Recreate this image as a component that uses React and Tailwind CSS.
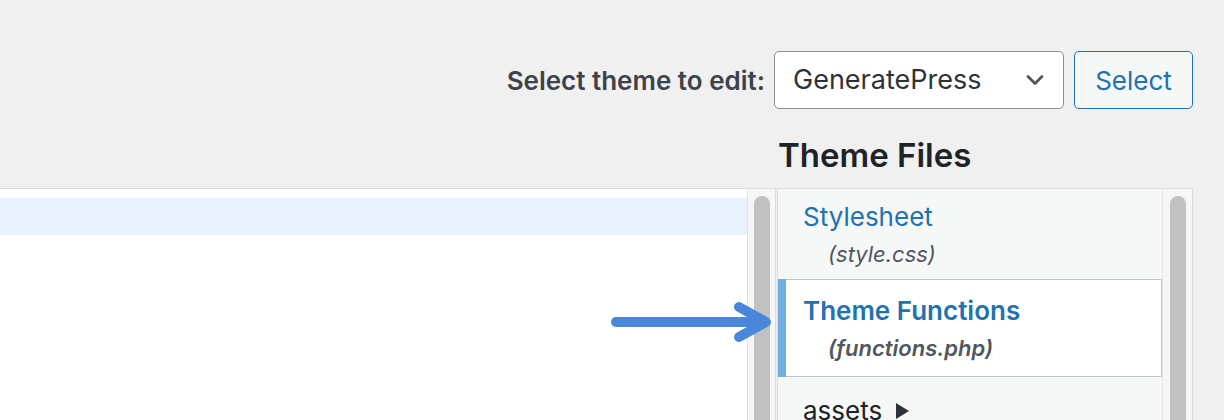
import { ChevronDown } from 'lucide-react';

const font = { fontFamily: 'Inter, "Noto Sans", sans-serif' };

const FileItem = ({ name, file, active }) => (
  <div
    className={`relative pl-[25px] ${active ? 'bg-white border border-[#c3c4c7] border-l-0 h-[98px] pt-[15px]' : 'h-[90px] pt-[12px]'}`}
  >
    {active && <div className="absolute left-0 -top-px -bottom-px w-[8px] bg-[#72aee6]"></div>}
    <div className={`text-[26px] leading-[32px] text-[#2271b1] ${active ? 'font-semibold' : ''}`}>{name}</div>
    <div className={`pl-[25px] mt-[6px] text-[22px] leading-[30px] italic text-[#50575e] ${active ? 'font-semibold' : ''}`}>
      {file}
    </div>
  </div>
);

const Scrollbar = ({ className }) => (
  <div className={`shrink-0 bg-[#f6f6f6] pt-[7px] flex justify-center ${className}`}>
    <div className="w-[16px] h-[400px] rounded-full bg-[#c1c1c1]"></div>
  </div>
);

export default function App() {
  return (
    <div className="relative w-full h-[420px] overflow-hidden bg-[#f0f0f1]" style={font}>
      <div className="flex justify-end items-center pt-[51px] pr-[31px]">
        <label className="text-[26px] font-semibold text-[#3c434a] mr-[9px]">Select theme to edit:</label>
        <div className="w-[290px] h-[58px] bg-white border border-[#8c8f94] rounded-[5px] flex items-center justify-between pl-[18px] pr-[14px]">
          <span className="text-[27px] text-[#2c3338]">GeneratePress</span>
          <ChevronDown className="w-[28px] h-[28px] text-[#50575e]" strokeWidth={2.4} />
        </div>
        <button className="ml-[10px] w-[119px] h-[58px] border border-[#2271b1] rounded-[5px] bg-[#f6f7f7] text-[26px] text-[#2271b1]">
          Select
        </button>
      </div>

      <div className="flex items-start pr-[31px]">
        <div className="w-[776px] mt-[79px] h-[300px] flex border-t border-[#dcdcde] bg-white">
          <div className="flex-1 pt-[9px] border-r border-[#e2e2e2]">
            <div className="h-[37px] bg-[#e8f2fd]"></div>
          </div>
          <Scrollbar className="w-[28px] border-r border-[#dcdcde]" />
        </div>

        <div className="w-[416px] ml-[1px]">
          <h2 className="h-[79px] pt-[26px] pl-[1px] text-[33px] leading-[40px] font-semibold text-[#1d2327]">Theme Files</h2>
          <div className="flex h-[300px] border border-[#dcdcde] bg-[#f6f7f7]">
            <div className="flex-1">
              <FileItem name="Stylesheet" file="(style.css)" />
              <FileItem name="Theme Functions" file="(functions.php)" active />
              <div className="pl-[25px] pt-[18px] flex items-center gap-[14px] text-[26px] leading-[32px] text-[#1d2327]">
                assets
                <span className="w-0 h-0 border-y-[8px] border-y-transparent border-l-[13px] border-l-[#2c3338]"></span>
              </div>
            </div>
            <Scrollbar className="w-[30px] border-l border-[#e6e6e6]" />
          </div>
        </div>
      </div>

      <svg className="absolute left-[600px] top-[295px]" width="180" height="55" viewBox="600 295 180 55">
        <path d="M616 322 H762" stroke="#4a86db" strokeWidth="10" strokeLinecap="round" />
        <path d="M739 307 L766 322 L739 337" stroke="#4a86db" strokeWidth="10" fill="none" strokeLinecap="round" strokeLinejoin="round" />
      </svg>
    </div>
  );
}
